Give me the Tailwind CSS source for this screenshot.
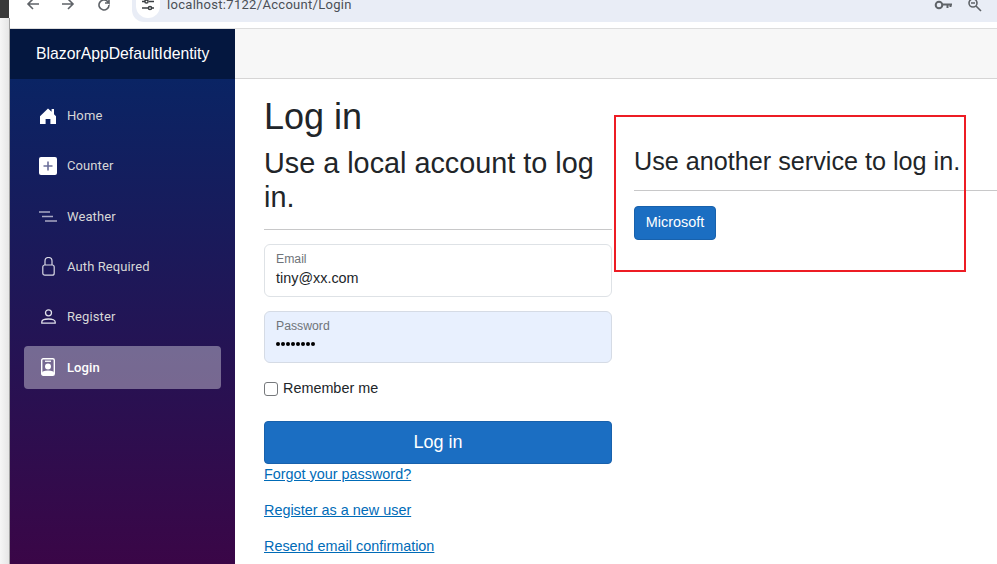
<!DOCTYPE html>
<html>
<head>
<meta charset="utf-8">
<script src="https://cdn.jsdelivr.net/npm/@tailwindcss/browser@4"></script>
</head>
<body class="m-0 w-[997px] h-[564px] overflow-hidden bg-white font-['Liberation_Sans',Arial,sans-serif] text-[#212529] relative">
  <!-- browser chrome -->
  <div class="h-[29px] flex bg-white">
    <div class="w-[10px] shrink-0 flex flex-col">
      <div class="h-[18px] bg-[#3a3a3a] border-r border-white"></div>
      <div class="grow bg-[linear-gradient(90deg,#f6f6f6,#e6e6e6)] border-r border-[#a0a0a0]"></div>
    </div>
    <div class="flex items-start h-[29px] grow border-b border-[#dddddd]">
      <svg class="ml-[15px] mt-[-3px]" width="16" height="16" viewBox="0 0 16 16" fill="none" stroke="#5f6368" stroke-width="1.6"><path d="M14 7H3M8 2 3 7l5 5"/></svg>
      <svg class="ml-[19px] mt-[-3px]" width="16" height="16" viewBox="0 0 16 16" fill="none" stroke="#5f6368" stroke-width="1.6"><path d="M2 7h11M8 2l5 5-5 5"/></svg>
      <svg class="ml-[20px] mt-[-3px]" width="16" height="16" viewBox="0 0 16 16" fill="none" stroke="#5f6368" stroke-width="1.6"><path d="M13 8a5 5 0 1 1-1.5-3.6L13 6V2M13 6H9"/></svg>
      <div class="ml-[20px] grow h-[22px] bg-[#e9edf6] rounded-bl-[12px] flex items-start relative">
        <div class="w-[24px] h-[18px] bg-white rounded-b-full ml-[4px] flex justify-center shrink-0">
          <svg class="mt-[-1px]" width="14" height="12" viewBox="0 0 14 12" fill="none" stroke="#3c4043" stroke-width="1.5"><path d="M1 2.5h3M8 2.5h5M1 9h6M11 9h2"/><circle cx="9" cy="9" r="1.6"/><circle cx="5.5" cy="2.5" r="1.6"/></svg>
        </div>
        <span class="ml-[7px] mt-[-3px] text-[13px] leading-[16px] text-[#4a4f55] font-['Roboto',sans-serif] tracking-[0.3px]">localhost:7122/Account/Login</span>
        <svg class="absolute left-[802px] top-0" width="20" height="11" viewBox="0 0 20 11" fill="none" stroke="#5f6368"><circle cx="5" cy="5" r="3.3" stroke-width="2"/><path d="M8 4.5h10M13.5 5v3M16.5 5v2" stroke-width="2"/></svg>
        <svg class="absolute left-[835px] top-[-1px]" width="16" height="14" viewBox="0 0 16 14" fill="none" stroke="#5f6368" stroke-width="1.6"><circle cx="6" cy="4" r="4"/><path d="M4 4h4M9 7l5 5"/></svg>
      </div>
    </div>
  </div>
  <div class="flex h-[535px]">
    <div class="w-[10px] shrink-0 bg-[linear-gradient(90deg,#f6f6f6,#e6e6e6)] border-r border-[#a0a0a0]"></div>
    <!-- sidebar -->
    <aside class="w-[225px] shrink-0 bg-[linear-gradient(180deg,#052767_0%,#3a0647_100%)] flex flex-col">
      <div class="h-[50px] bg-[#04173f] flex items-center pl-[26px] text-white text-[15.75px]">BlazorAppDefaultIdentity</div>
      <nav class="flex flex-col pt-[16px] px-[14px] text-[13px] font-['Roboto','Liberation_Sans',sans-serif] text-[#d7d7d7] tracking-[0.1px]">
        <a class="h-[42px] mb-[8.2px] flex items-center">
          <span class="w-[20px] ml-[14px] mr-[9px] flex justify-center"><svg width="16" height="16" viewBox="0 0 16 16" fill="#fff"><path d="M8 .5 0 8.2V16h5.6v-5h4.8v5H16V8.2l-2-2V1h-2.4v2.8z"/></svg></span>Home</a>
        <a class="h-[42px] mb-[8.2px] flex items-center">
          <span class="w-[20px] ml-[14px] mr-[9px] flex justify-center"><svg width="18" height="18" viewBox="0 0 18 18"><rect width="18" height="18" rx="2" fill="#fff"/><path d="M9 4.5v9M4.5 9h9" stroke="#6b6f99" stroke-width="1.6"/></svg></span>Counter</a>
        <a class="h-[42px] mb-[8.2px] flex items-center">
          <span class="w-[20px] ml-[14px] mr-[9px] flex justify-center"><svg width="18" height="11" viewBox="0 0 18 11" stroke="#a9a9c4" stroke-width="1.4"><path d="M0 1h11M3 5.5h11M6 10h12"/></svg></span>Weather</a>
        <a class="h-[42px] mb-[8.2px] flex items-center">
          <span class="w-[20px] ml-[14px] mr-[9px] flex justify-center"><svg width="13" height="19" viewBox="0 0 13 19" fill="none" stroke="#d8d8e4" stroke-width="1.2"><rect x=".8" y="8" width="11.4" height="10.2" rx="2"/><path d="M3 8V4a3.5 3.5 0 0 1 7 0v4"/></svg></span>Auth Required</a>
        <a class="h-[42px] mb-[8.2px] flex items-center">
          <span class="w-[20px] ml-[14px] mr-[9px] flex justify-center"><svg width="15" height="15" viewBox="0 0 15 15" fill="none" stroke="#e0e0ea" stroke-width="1.3"><circle cx="7.5" cy="3.8" r="3"/><path d="M.8 14.2v-1.2c0-2 2.5-3 6.7-3s6.7 1 6.7 3v1.2z"/></svg></span>Register</a>
        <a class="h-[43px] flex items-center rounded-[4px] bg-white/37 text-white font-medium">
          <span class="w-[20px] ml-[14px] mr-[9px] flex justify-center"><svg width="14" height="18" viewBox="0 0 14 18"><rect x=".7" y=".7" width="12.6" height="16.6" rx="1.5" fill="none" stroke="#fff" stroke-width="1.4"/><rect x="4" y="2.6" width="6" height="1.3" fill="#fff"/><circle cx="7" cy="8.5" r="3" fill="#fff"/><path d="M1 17v-2.5c0-1 2-2 6-2s6 1 6 2V17z" fill="#fff"/></svg></span>Login</a>
      </nav>
    </aside>
    <!-- main -->
    <main class="grow flex flex-col min-w-0">
      <div class="h-[50px] bg-[#f7f7f7] border-b border-[#d6d5d5] shrink-0"></div>
      <div class="flex pl-[29px] pt-[17px] min-w-0">
        <div class="w-[348px] shrink-0">
          <h1 class="text-[36px] leading-[42px] font-normal mb-[8px]">Log in</h1>
          <h2 class="text-[28.8px] leading-[34px] font-normal">Use a local account to log in.</h2>
          <hr class="mt-[15px] mb-[14px] border-t border-[#c8c8c9]">
          <div class="h-[53px] border border-[#dee2e6] rounded-[6px] bg-white pl-[11px] pt-[7px] mb-[14px]">
            <div class="text-[12.24px] leading-[14px] text-[#6f7479]">Email</div>
            <div class="text-[14.4px] leading-[20px] mt-[2px]">tiny@xx.com</div>
          </div>
          <div class="h-[52px] border border-[#d5dbe5] rounded-[6px] bg-[#e8f0fe] pl-[11px] pt-[7px] mb-[17px]">
            <div class="text-[12.24px] leading-[14px] text-[#6f7479]">Password</div>
            <div class="flex gap-[1px] mt-[9px]">
              <i class="w-[4px] h-[4px] rounded-full bg-black"></i><i class="w-[4px] h-[4px] rounded-full bg-black"></i><i class="w-[4px] h-[4px] rounded-full bg-black"></i><i class="w-[4px] h-[4px] rounded-full bg-black"></i><i class="w-[4px] h-[4px] rounded-full bg-black"></i><i class="w-[4px] h-[4px] rounded-full bg-black"></i><i class="w-[4px] h-[4px] rounded-full bg-black"></i><i class="w-[4px] h-[4px] rounded-full bg-black"></i>
            </div>
          </div>
          <div class="flex items-center h-[18px] mb-[23px]">
            <span class="w-[14px] h-[14px] border border-[#76797c] rounded-[3px] mr-[5px]"></span>
            <span class="text-[14.4px]">Remember me</span>
          </div>
          <button class="w-full h-[43px] rounded-[4px] bg-[#1b6ec2] border border-[#1861ac] text-white text-[18px] block">Log in</button>
          <a class="block text-[14.4px] leading-[21px] text-[#006bb7] underline mb-[15px]">Forgot your password?</a>
          <a class="block text-[14.4px] leading-[21px] text-[#006bb7] underline mb-[15px]">Register as a new user</a>
          <a class="block text-[14.4px] leading-[21px] text-[#006bb7] underline">Resend email confirmation</a>
        </div>
        <div class="ml-[22px] w-[400px] shrink-0 pt-[51px]">
          <h3 class="text-[25.2px] leading-[29px] font-normal whitespace-nowrap">Use another service to log in.</h3>
          <hr class="mt-[14px] mb-[15px] border-t border-[#c8c8c9]">
          <button class="w-[82px] h-[34px] rounded-[4px] bg-[#1b6ec2] border border-[#1861ac] text-white text-[14.4px] block">Microsoft</button>
        </div>
      </div>
    </main>
  </div>
  <!-- annotation rectangle -->
  <div class="absolute left-[614px] top-[115px] w-[352px] h-[157px] border-2 border-[#ed1c24] pointer-events-none"></div>
</body>
</html>
